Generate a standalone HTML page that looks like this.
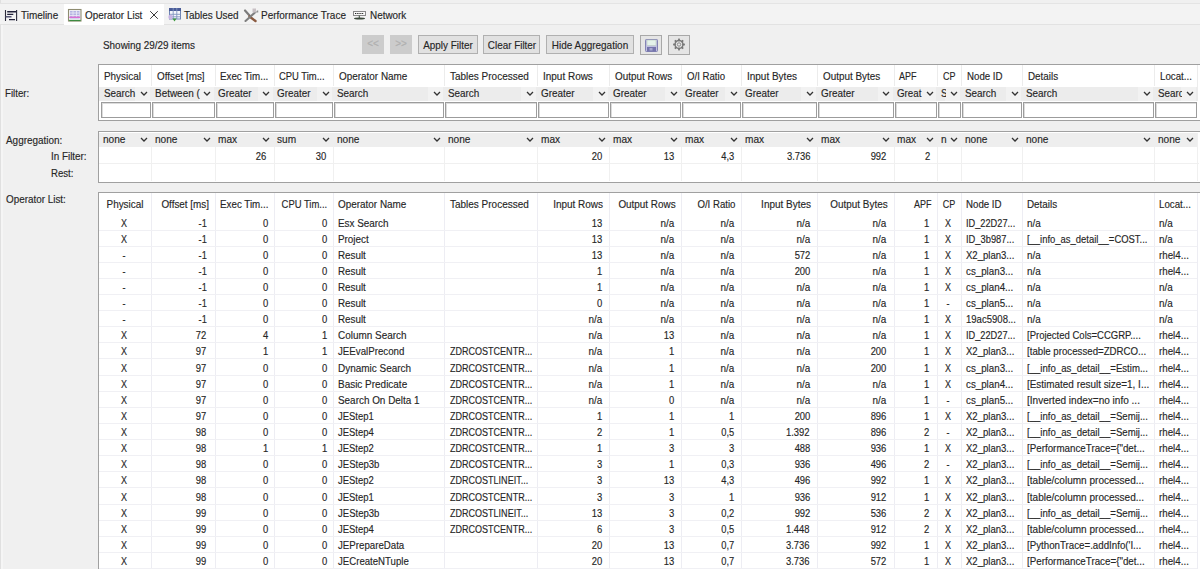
<!DOCTYPE html>
<html><head><meta charset="utf-8"><style>
html,body{margin:0;padding:0;width:1200px;height:569px;overflow:hidden;background:#f0f0f0;position:relative}
body{font-family:"Liberation Sans",sans-serif;font-size:11px;color:#262626}
.b{position:absolute;box-sizing:content-box}
.t{position:absolute;white-space:nowrap;line-height:12px;height:12px}
.t span{display:inline-block;-webkit-text-stroke:0.15px currentColor}
</style></head><body>
<div class="b" style="left:0.00px;top:0.00px;width:1.00px;height:569.00px;background:#e0e0e0;"></div>
<div class="b" style="left:1.00px;top:25.00px;width:2.00px;height:544.00px;background:#f5f5f5;"></div>
<div class="b" style="left:0.00px;top:3.00px;width:1200.00px;height:1.00px;background:#e4e4e4;"></div>
<div class="b" style="left:0.00px;top:4.00px;width:1200.00px;height:20.00px;background:#f3f3f3;"></div>
<div class="b" style="left:0.00px;top:24.00px;width:1200.00px;height:1.00px;background:#e2e2e2;"></div>
<div class="b" style="left:64.00px;top:4.00px;width:100.00px;height:21.00px;background:#ffffff;"></div>
<svg class="b" style="left:2px;top:6px" width="20" height="18" viewBox="0 0 20 18">
<path d="M3.5 4v11M14.6 4v11" stroke="#2c2c3c" stroke-width="1.1"/>
<path d="M5.2 5.7h9M5.2 8.4h6.1M7 13.6h6" stroke="#22223a" stroke-width="1.4"/>
<path d="M3.5 10.8h6" stroke="#4a4a6a" stroke-width="1.4"/>
</svg>
<svg class="b" style="left:64px;top:5px" width="22" height="20" viewBox="0 0 22 20">
<rect x="4.5" y="4.5" width="12.5" height="11.5" fill="#f2f2f8" stroke="#8e8c70" stroke-width="1.1"/>
<rect x="6" y="6" width="9.5" height="7.5" fill="#b4b4e2"/>
<path d="M6 8h9.5M6 10.5h9.5M9 6v7M12.5 6v7" stroke="#ececf8" stroke-width="0.8"/>
<path d="M5.2 12.3h11" stroke="#dc70d4" stroke-width="1.4"/>
<path d="M5.2 15.5h11.5" stroke="#3c8a40" stroke-width="1.2"/>
</svg>
<svg class="b" style="left:149px;top:10px" width="10" height="10" viewBox="0 0 10 10">
<path d="M1.2 1.2L8.8 8.8M8.8 1.2L1.2 8.8" stroke="#3a3a3a" stroke-width="1"/>
</svg>
<svg class="b" style="left:164px;top:5px" width="22" height="20" viewBox="0 0 22 20">
<rect x="5.5" y="3.5" width="11" height="10.5" fill="#f4f6fc" stroke="#6e84b4" stroke-width="1"/>
<rect x="5" y="3" width="12" height="3" fill="#4a5c98"/>
<path d="M5.5 9.3h11M5.5 11.8h11M9.2 3v11M12.8 3v11" stroke="#8094c0" stroke-width="0.9"/>
<circle cx="6.5" cy="12" r="2.2" fill="#c8b4e4"/>
<path d="M8.5 13.5l2 3 2-3z" fill="#3a9a3a"/>
</svg>
<svg class="b" style="left:240px;top:4px" width="22" height="20" viewBox="0 0 22 20">
<path d="M5 6.5l4.5 5" stroke="#7c7c7c" stroke-width="2.2" stroke-linecap="round"/>
<path d="M9.5 12.5l6 4.5" stroke="#8a5a40" stroke-width="2.4" stroke-linecap="round"/>
<path d="M15.5 8l-10 9" stroke="#808080" stroke-width="2.1" stroke-linecap="round"/>
<path d="M12.5 4.5h3.5v4h-3.5z" fill="#c8c0c4"/>
<path d="M17.5 6.5v2" stroke="#909090" stroke-width="1.5"/>
</svg>
<svg class="b" style="left:348px;top:4px" width="22" height="20" viewBox="0 0 22 20">
<rect x="5.5" y="7.5" width="12" height="4" fill="#fafafa" stroke="#8a8a8a" stroke-width="1"/>
<path d="M7 9.5h9" stroke="#222" stroke-width="1.2" stroke-dasharray="1.3 0.9"/>
<path d="M11.3 11.5v3" stroke="#4a5a4a" stroke-width="1.1"/>
<ellipse cx="11.5" cy="14.4" rx="5.5" ry="1" fill="#3c4a3c"/>
</svg>
<div class="t " style="left:21.00px;top:9.00px;"><span style="transform:scaleX(0.903);transform-origin:0 0">Timeline</span></div>
<div class="t " style="left:85.00px;top:9.00px;"><span style="transform:scaleX(0.902);transform-origin:0 0">Operator List</span></div>
<div class="t " style="left:184.00px;top:9.00px;"><span style="transform:scaleX(0.901);transform-origin:0 0">Tables Used</span></div>
<div class="t " style="left:261.00px;top:9.00px;"><span style="transform:scaleX(0.908);transform-origin:0 0">Performance Trace</span></div>
<div class="t " style="left:370.00px;top:9.00px;"><span style="transform:scaleX(0.899);transform-origin:0 0">Network</span></div>
<div class="t " style="left:103.00px;top:38.50px;"><span style="transform:scaleX(0.901);transform-origin:0 0">Showing 29/29 items</span></div>
<div class="b" style="left:362.00px;top:35.00px;width:22.00px;height:19.00px;background:#cccccc;"></div>
<div class="t " style="left:373.00px;top:38.00px;width:0;color:#b0b0b0;font-size:10px;"><span style="position:absolute;left:0;transform:translateX(-50%) scaleX(1.000);">&lt;&lt;</span></div>
<div class="b" style="left:390.00px;top:35.00px;width:22.00px;height:19.00px;background:#cccccc;"></div>
<div class="t " style="left:401.00px;top:38.00px;width:0;color:#b0b0b0;font-size:10px;"><span style="position:absolute;left:0;transform:translateX(-50%) scaleX(1.000);">&gt;&gt;</span></div>
<div class="b" style="left:418.00px;top:35.00px;width:58.00px;height:17.00px;background:#e1e1e1;border:1px solid #b0b0b0;"></div>
<div class="t " style="left:448.00px;top:38.50px;width:0;"><span style="position:absolute;left:0;transform:translateX(-50%) scaleX(0.900);">Apply Filter</span></div>
<div class="b" style="left:483.00px;top:35.00px;width:55.00px;height:17.00px;background:#e1e1e1;border:1px solid #b0b0b0;"></div>
<div class="t " style="left:511.50px;top:38.50px;width:0;"><span style="position:absolute;left:0;transform:translateX(-50%) scaleX(0.898);">Clear Filter</span></div>
<div class="b" style="left:546.00px;top:35.00px;width:86.00px;height:17.00px;background:#e1e1e1;border:1px solid #b0b0b0;"></div>
<div class="t " style="left:590.00px;top:38.50px;width:0;"><span style="position:absolute;left:0;transform:translateX(-50%) scaleX(0.905);">Hide Aggregation</span></div>
<div class="b" style="left:640.00px;top:35.00px;width:20.00px;height:18.00px;background:#e5e5e5;border:1px solid #a8a8a8;"></div>
<svg class="b" style="left:644px;top:38px" width="15" height="15" viewBox="0 0 15 15">
<rect x="1.5" y="1.5" width="12" height="12" rx="0.8" fill="#c0c0e0" stroke="#8484b4" stroke-width="1"/>
<rect x="3" y="2" width="9" height="5.5" fill="#e4f2ea" stroke="#b8c8c0" stroke-width="0.6"/>
<rect x="3" y="9" width="9" height="4.5" fill="#7474ac"/>
<rect x="5.5" y="10" width="3" height="2.5" fill="#a8a8d0"/>
</svg>
<div class="b" style="left:668.00px;top:35.00px;width:20.00px;height:18.00px;background:#e5e5e5;border:1px solid #a8a8a8;"></div>
<svg class="b" style="left:672px;top:38px" width="14" height="13" viewBox="0 0 14 13">
<circle cx="7" cy="6.5" r="4.0" fill="none" stroke="#7a7a7a" stroke-width="1.5"/>
<rect x="6.1" y="0.6" width="1.8" height="2.6" fill="#777" transform="rotate(0 7 6.5)"/><rect x="6.1" y="0.6" width="1.8" height="2.6" fill="#777" transform="rotate(45 7 6.5)"/><rect x="6.1" y="0.6" width="1.8" height="2.6" fill="#777" transform="rotate(90 7 6.5)"/><rect x="6.1" y="0.6" width="1.8" height="2.6" fill="#777" transform="rotate(135 7 6.5)"/><rect x="6.1" y="0.6" width="1.8" height="2.6" fill="#777" transform="rotate(180 7 6.5)"/><rect x="6.1" y="0.6" width="1.8" height="2.6" fill="#777" transform="rotate(225 7 6.5)"/><rect x="6.1" y="0.6" width="1.8" height="2.6" fill="#777" transform="rotate(270 7 6.5)"/><rect x="6.1" y="0.6" width="1.8" height="2.6" fill="#777" transform="rotate(315 7 6.5)"/>
<circle cx="7" cy="6.5" r="1.7" fill="none" stroke="#8a8a8a" stroke-width="1"/>
</svg>
<div class="t " style="left:4.50px;top:86.50px;"><span style="transform:scaleX(0.882);transform-origin:0 0">Filter:</span></div>
<div class="t " style="left:5.50px;top:133.70px;"><span style="transform:scaleX(0.902);transform-origin:0 0">Aggregation:</span></div>
<div class="t " style="left:51.00px;top:150.30px;"><span style="transform:scaleX(0.896);transform-origin:0 0">In Filter:</span></div>
<div class="t " style="left:51.00px;top:167.20px;"><span style="transform:scaleX(0.875);transform-origin:0 0">Rest:</span></div>
<div class="t " style="left:5.50px;top:193.30px;"><span style="transform:scaleX(0.898);transform-origin:0 0">Operator List:</span></div>
<div class="b" style="left:98.00px;top:64.00px;width:1110.00px;height:55.00px;background:#ffffff;border:1px solid #a0a0a0;"></div>
<div class="t " style="left:104.20px;top:70.00px;"><span style="transform:scaleX(0.901);transform-origin:0 0">Physical</span></div>
<div class="b" style="left:99.00px;top:87.00px;width:52.00px;height:14.00px;background:#ececec;"></div>
<div class="b" style="left:135.00px;top:87.00px;width:15.00px;height:14.00px;background:#f2f2f2;"></div>
<svg class="b" style="left:139.5px;top:91px" width="8" height="6" viewBox="0 0 8 6"><path d="M1 1l3 3 3-3" fill="none" stroke="#333" stroke-width="1.3"/></svg>
<div class="b" style="left:99.0px;top:80px;width:37.0px;height:24px;overflow:hidden">
<div class="t " style="left:4.75px;top:6.50px;"><span style="transform:scaleX(0.898);transform-origin:0 0">Search</span></div>
</div>
<div class="b" style="left:101.00px;top:102.00px;width:48.00px;height:14.00px;background:#ffffff;border:1px solid #9c9c9c;box-shadow:inset 1px 1px 0 #dcdcdc;"></div>
<div class="b" style="left:151.00px;top:65.00px;width:1.00px;height:21.00px;background:#ececec;"></div>
<div class="t " style="left:156.50px;top:70.00px;"><span style="transform:scaleX(0.898);transform-origin:0 0">Offset [ms]</span></div>
<div class="b" style="left:151.00px;top:87.00px;width:63.50px;height:14.00px;background:#ececec;"></div>
<div class="b" style="left:198.50px;top:87.00px;width:15.00px;height:14.00px;background:#f2f2f2;"></div>
<svg class="b" style="left:203.0px;top:91px" width="8" height="6" viewBox="0 0 8 6"><path d="M1 1l3 3 3-3" fill="none" stroke="#333" stroke-width="1.3"/></svg>
<div class="b" style="left:152.0px;top:80px;width:47.5px;height:24px;overflow:hidden">
<div class="t " style="left:2.50px;top:6.50px;"><span style="transform:scaleX(0.904);transform-origin:0 0">Between (</span></div>
</div>
<div class="b" style="left:152.00px;top:102.00px;width:60.50px;height:14.00px;background:#ffffff;border:1px solid #9c9c9c;box-shadow:inset 1px 1px 0 #dcdcdc;"></div>
<div class="b" style="left:214.50px;top:65.00px;width:1.00px;height:21.00px;background:#ececec;"></div>
<div class="t " style="left:220.00px;top:70.00px;"><span style="transform:scaleX(0.888);transform-origin:0 0">Exec Tim...</span></div>
<div class="b" style="left:214.50px;top:87.00px;width:59.00px;height:14.00px;background:#ececec;"></div>
<div class="b" style="left:257.50px;top:87.00px;width:15.00px;height:14.00px;background:#f2f2f2;"></div>
<svg class="b" style="left:262.0px;top:91px" width="8" height="6" viewBox="0 0 8 6"><path d="M1 1l3 3 3-3" fill="none" stroke="#333" stroke-width="1.3"/></svg>
<div class="b" style="left:215.5px;top:80px;width:43.0px;height:24px;overflow:hidden">
<div class="t " style="left:2.50px;top:6.50px;"><span style="transform:scaleX(0.896);transform-origin:0 0">Greater</span></div>
</div>
<div class="b" style="left:215.50px;top:102.00px;width:56.00px;height:14.00px;background:#ffffff;border:1px solid #9c9c9c;box-shadow:inset 1px 1px 0 #dcdcdc;"></div>
<div class="b" style="left:273.50px;top:65.00px;width:1.00px;height:21.00px;background:#ececec;"></div>
<div class="t " style="left:279.00px;top:70.00px;"><span style="transform:scaleX(0.857);transform-origin:0 0">CPU Tim...</span></div>
<div class="b" style="left:273.50px;top:87.00px;width:59.50px;height:14.00px;background:#ececec;"></div>
<div class="b" style="left:317.00px;top:87.00px;width:15.00px;height:14.00px;background:#f2f2f2;"></div>
<svg class="b" style="left:321.5px;top:91px" width="8" height="6" viewBox="0 0 8 6"><path d="M1 1l3 3 3-3" fill="none" stroke="#333" stroke-width="1.3"/></svg>
<div class="b" style="left:274.5px;top:80px;width:43.5px;height:24px;overflow:hidden">
<div class="t " style="left:2.50px;top:6.50px;"><span style="transform:scaleX(0.896);transform-origin:0 0">Greater</span></div>
</div>
<div class="b" style="left:274.50px;top:102.00px;width:56.50px;height:14.00px;background:#ffffff;border:1px solid #9c9c9c;box-shadow:inset 1px 1px 0 #dcdcdc;"></div>
<div class="b" style="left:333.00px;top:65.00px;width:1.00px;height:21.00px;background:#ececec;"></div>
<div class="t " style="left:338.50px;top:70.00px;"><span style="transform:scaleX(0.902);transform-origin:0 0">Operator Name</span></div>
<div class="b" style="left:333.00px;top:87.00px;width:111.00px;height:14.00px;background:#ececec;"></div>
<div class="b" style="left:428.00px;top:87.00px;width:15.00px;height:14.00px;background:#f2f2f2;"></div>
<svg class="b" style="left:432.5px;top:91px" width="8" height="6" viewBox="0 0 8 6"><path d="M1 1l3 3 3-3" fill="none" stroke="#333" stroke-width="1.3"/></svg>
<div class="b" style="left:334.0px;top:80px;width:95.0px;height:24px;overflow:hidden">
<div class="t " style="left:2.50px;top:6.50px;"><span style="transform:scaleX(0.898);transform-origin:0 0">Search</span></div>
</div>
<div class="b" style="left:334.00px;top:102.00px;width:108.00px;height:14.00px;background:#ffffff;border:1px solid #9c9c9c;box-shadow:inset 1px 1px 0 #dcdcdc;"></div>
<div class="b" style="left:444.00px;top:65.00px;width:1.00px;height:21.00px;background:#ececec;"></div>
<div class="t " style="left:449.50px;top:70.00px;"><span style="transform:scaleX(0.907);transform-origin:0 0">Tables Processed</span></div>
<div class="b" style="left:444.00px;top:87.00px;width:93.00px;height:14.00px;background:#ececec;"></div>
<div class="b" style="left:521.00px;top:87.00px;width:15.00px;height:14.00px;background:#f2f2f2;"></div>
<svg class="b" style="left:525.5px;top:91px" width="8" height="6" viewBox="0 0 8 6"><path d="M1 1l3 3 3-3" fill="none" stroke="#333" stroke-width="1.3"/></svg>
<div class="b" style="left:445.0px;top:80px;width:77.0px;height:24px;overflow:hidden">
<div class="t " style="left:2.50px;top:6.50px;"><span style="transform:scaleX(0.898);transform-origin:0 0">Search</span></div>
</div>
<div class="b" style="left:445.00px;top:102.00px;width:90.00px;height:14.00px;background:#ffffff;border:1px solid #9c9c9c;box-shadow:inset 1px 1px 0 #dcdcdc;"></div>
<div class="b" style="left:537.00px;top:65.00px;width:1.00px;height:21.00px;background:#ececec;"></div>
<div class="t " style="left:542.50px;top:70.00px;"><span style="transform:scaleX(0.906);transform-origin:0 0">Input Rows</span></div>
<div class="b" style="left:537.00px;top:87.00px;width:72.00px;height:14.00px;background:#ececec;"></div>
<div class="b" style="left:593.00px;top:87.00px;width:15.00px;height:14.00px;background:#f2f2f2;"></div>
<svg class="b" style="left:597.5px;top:91px" width="8" height="6" viewBox="0 0 8 6"><path d="M1 1l3 3 3-3" fill="none" stroke="#333" stroke-width="1.3"/></svg>
<div class="b" style="left:538.0px;top:80px;width:56.0px;height:24px;overflow:hidden">
<div class="t " style="left:2.50px;top:6.50px;"><span style="transform:scaleX(0.896);transform-origin:0 0">Greater</span></div>
</div>
<div class="b" style="left:538.00px;top:102.00px;width:69.00px;height:14.00px;background:#ffffff;border:1px solid #9c9c9c;box-shadow:inset 1px 1px 0 #dcdcdc;"></div>
<div class="b" style="left:609.00px;top:65.00px;width:1.00px;height:21.00px;background:#ececec;"></div>
<div class="t " style="left:614.50px;top:70.00px;"><span style="transform:scaleX(0.899);transform-origin:0 0">Output Rows</span></div>
<div class="b" style="left:609.00px;top:87.00px;width:72.00px;height:14.00px;background:#ececec;"></div>
<div class="b" style="left:665.00px;top:87.00px;width:15.00px;height:14.00px;background:#f2f2f2;"></div>
<svg class="b" style="left:669.5px;top:91px" width="8" height="6" viewBox="0 0 8 6"><path d="M1 1l3 3 3-3" fill="none" stroke="#333" stroke-width="1.3"/></svg>
<div class="b" style="left:610.0px;top:80px;width:56.0px;height:24px;overflow:hidden">
<div class="t " style="left:2.50px;top:6.50px;"><span style="transform:scaleX(0.896);transform-origin:0 0">Greater</span></div>
</div>
<div class="b" style="left:610.00px;top:102.00px;width:69.00px;height:14.00px;background:#ffffff;border:1px solid #9c9c9c;box-shadow:inset 1px 1px 0 #dcdcdc;"></div>
<div class="b" style="left:681.00px;top:65.00px;width:1.00px;height:21.00px;background:#ececec;"></div>
<div class="t " style="left:686.50px;top:70.00px;"><span style="transform:scaleX(0.875);transform-origin:0 0">O/I Ratio</span></div>
<div class="b" style="left:681.00px;top:87.00px;width:60.00px;height:14.00px;background:#ececec;"></div>
<div class="b" style="left:725.00px;top:87.00px;width:15.00px;height:14.00px;background:#f2f2f2;"></div>
<svg class="b" style="left:729.5px;top:91px" width="8" height="6" viewBox="0 0 8 6"><path d="M1 1l3 3 3-3" fill="none" stroke="#333" stroke-width="1.3"/></svg>
<div class="b" style="left:682.0px;top:80px;width:44.0px;height:24px;overflow:hidden">
<div class="t " style="left:2.50px;top:6.50px;"><span style="transform:scaleX(0.896);transform-origin:0 0">Greater</span></div>
</div>
<div class="b" style="left:682.00px;top:102.00px;width:57.00px;height:14.00px;background:#ffffff;border:1px solid #9c9c9c;box-shadow:inset 1px 1px 0 #dcdcdc;"></div>
<div class="b" style="left:741.00px;top:65.00px;width:1.00px;height:21.00px;background:#ececec;"></div>
<div class="t " style="left:746.50px;top:70.00px;"><span style="transform:scaleX(0.907);transform-origin:0 0">Input Bytes</span></div>
<div class="b" style="left:741.00px;top:87.00px;width:76.00px;height:14.00px;background:#ececec;"></div>
<div class="b" style="left:801.00px;top:87.00px;width:15.00px;height:14.00px;background:#f2f2f2;"></div>
<svg class="b" style="left:805.5px;top:91px" width="8" height="6" viewBox="0 0 8 6"><path d="M1 1l3 3 3-3" fill="none" stroke="#333" stroke-width="1.3"/></svg>
<div class="b" style="left:742.0px;top:80px;width:60.0px;height:24px;overflow:hidden">
<div class="t " style="left:2.50px;top:6.50px;"><span style="transform:scaleX(0.896);transform-origin:0 0">Greater</span></div>
</div>
<div class="b" style="left:742.00px;top:102.00px;width:73.00px;height:14.00px;background:#ffffff;border:1px solid #9c9c9c;box-shadow:inset 1px 1px 0 #dcdcdc;"></div>
<div class="b" style="left:817.00px;top:65.00px;width:1.00px;height:21.00px;background:#ececec;"></div>
<div class="t " style="left:822.50px;top:70.00px;"><span style="transform:scaleX(0.900);transform-origin:0 0">Output Bytes</span></div>
<div class="b" style="left:817.00px;top:87.00px;width:76.50px;height:14.00px;background:#ececec;"></div>
<div class="b" style="left:877.50px;top:87.00px;width:15.00px;height:14.00px;background:#f2f2f2;"></div>
<svg class="b" style="left:882.0px;top:91px" width="8" height="6" viewBox="0 0 8 6"><path d="M1 1l3 3 3-3" fill="none" stroke="#333" stroke-width="1.3"/></svg>
<div class="b" style="left:818.0px;top:80px;width:60.5px;height:24px;overflow:hidden">
<div class="t " style="left:2.50px;top:6.50px;"><span style="transform:scaleX(0.896);transform-origin:0 0">Greater</span></div>
</div>
<div class="b" style="left:818.00px;top:102.00px;width:73.50px;height:14.00px;background:#ffffff;border:1px solid #9c9c9c;box-shadow:inset 1px 1px 0 #dcdcdc;"></div>
<div class="b" style="left:893.50px;top:65.00px;width:1.00px;height:21.00px;background:#ececec;"></div>
<div class="t " style="left:899.00px;top:70.00px;"><span style="transform:scaleX(0.817);transform-origin:0 0">APF</span></div>
<div class="b" style="left:893.50px;top:87.00px;width:43.50px;height:14.00px;background:#ececec;"></div>
<div class="b" style="left:921.00px;top:87.00px;width:15.00px;height:14.00px;background:#f2f2f2;"></div>
<svg class="b" style="left:925.5px;top:91px" width="8" height="6" viewBox="0 0 8 6"><path d="M1 1l3 3 3-3" fill="none" stroke="#333" stroke-width="1.3"/></svg>
<div class="b" style="left:894.5px;top:80px;width:27.5px;height:24px;overflow:hidden">
<div class="t " style="left:2.50px;top:6.50px;"><span style="transform:scaleX(0.887);transform-origin:0 0">Great</span></div>
</div>
<div class="b" style="left:894.50px;top:102.00px;width:40.50px;height:14.00px;background:#ffffff;border:1px solid #9c9c9c;box-shadow:inset 1px 1px 0 #dcdcdc;"></div>
<div class="b" style="left:937.00px;top:65.00px;width:1.00px;height:21.00px;background:#ececec;"></div>
<div class="t " style="left:942.50px;top:70.00px;"><span style="transform:scaleX(0.817);transform-origin:0 0">CP</span></div>
<div class="b" style="left:937.00px;top:87.00px;width:24.00px;height:14.00px;background:#ececec;"></div>
<div class="b" style="left:945.00px;top:87.00px;width:15.00px;height:14.00px;background:#f2f2f2;"></div>
<svg class="b" style="left:949.5px;top:91px" width="8" height="6" viewBox="0 0 8 6"><path d="M1 1l3 3 3-3" fill="none" stroke="#333" stroke-width="1.3"/></svg>
<div class="b" style="left:938.0px;top:80px;width:8.0px;height:24px;overflow:hidden">
<div class="t " style="left:2.50px;top:6.50px;"><span style="transform:scaleX(0.863);transform-origin:0 0">Se</span></div>
</div>
<div class="b" style="left:938.00px;top:102.00px;width:21.00px;height:14.00px;background:#ffffff;border:1px solid #9c9c9c;box-shadow:inset 1px 1px 0 #dcdcdc;"></div>
<div class="b" style="left:961.00px;top:65.00px;width:1.00px;height:21.00px;background:#ececec;"></div>
<div class="t " style="left:966.50px;top:70.00px;"><span style="transform:scaleX(0.881);transform-origin:0 0">Node ID</span></div>
<div class="b" style="left:961.00px;top:87.00px;width:61.00px;height:14.00px;background:#ececec;"></div>
<div class="b" style="left:1006.00px;top:87.00px;width:15.00px;height:14.00px;background:#f2f2f2;"></div>
<svg class="b" style="left:1010.5px;top:91px" width="8" height="6" viewBox="0 0 8 6"><path d="M1 1l3 3 3-3" fill="none" stroke="#333" stroke-width="1.3"/></svg>
<div class="b" style="left:962.0px;top:80px;width:45.0px;height:24px;overflow:hidden">
<div class="t " style="left:2.50px;top:6.50px;"><span style="transform:scaleX(0.898);transform-origin:0 0">Search</span></div>
</div>
<div class="b" style="left:962.00px;top:102.00px;width:58.00px;height:14.00px;background:#ffffff;border:1px solid #9c9c9c;box-shadow:inset 1px 1px 0 #dcdcdc;"></div>
<div class="b" style="left:1022.00px;top:65.00px;width:1.00px;height:21.00px;background:#ececec;"></div>
<div class="t " style="left:1027.50px;top:70.00px;"><span style="transform:scaleX(0.895);transform-origin:0 0">Details</span></div>
<div class="b" style="left:1022.00px;top:87.00px;width:132.00px;height:14.00px;background:#ececec;"></div>
<div class="b" style="left:1138.00px;top:87.00px;width:15.00px;height:14.00px;background:#f2f2f2;"></div>
<svg class="b" style="left:1142.5px;top:91px" width="8" height="6" viewBox="0 0 8 6"><path d="M1 1l3 3 3-3" fill="none" stroke="#333" stroke-width="1.3"/></svg>
<div class="b" style="left:1023.0px;top:80px;width:116.0px;height:24px;overflow:hidden">
<div class="t " style="left:2.50px;top:6.50px;"><span style="transform:scaleX(0.898);transform-origin:0 0">Search</span></div>
</div>
<div class="b" style="left:1023.00px;top:102.00px;width:129.00px;height:14.00px;background:#ffffff;border:1px solid #9c9c9c;box-shadow:inset 1px 1px 0 #dcdcdc;"></div>
<div class="b" style="left:1154.00px;top:65.00px;width:1.00px;height:21.00px;background:#ececec;"></div>
<div class="b" style="left:1197.00px;top:65.00px;width:1.00px;height:36.00px;background:#ececec;"></div>
<div class="t " style="left:1159.50px;top:70.00px;"><span style="transform:scaleX(0.883);transform-origin:0 0">Locat...</span></div>
<div class="b" style="left:1154.00px;top:87.00px;width:43.00px;height:14.00px;background:#ececec;"></div>
<div class="b" style="left:1181.00px;top:87.00px;width:15.00px;height:14.00px;background:#f2f2f2;"></div>
<svg class="b" style="left:1185.5px;top:91px" width="8" height="6" viewBox="0 0 8 6"><path d="M1 1l3 3 3-3" fill="none" stroke="#333" stroke-width="1.3"/></svg>
<div class="b" style="left:1155.0px;top:80px;width:27.0px;height:24px;overflow:hidden">
<div class="t " style="left:2.50px;top:6.50px;"><span style="transform:scaleX(0.893);transform-origin:0 0">Searc</span></div>
</div>
<div class="b" style="left:1155.00px;top:102.00px;width:40.00px;height:14.00px;background:#ffffff;border:1px solid #9c9c9c;box-shadow:inset 1px 1px 0 #dcdcdc;"></div>
<div class="b" style="left:98.00px;top:131.00px;width:1110.00px;height:50.00px;background:#ffffff;border:1px solid #a0a0a0;"></div>
<div class="b" style="left:99.00px;top:133.00px;width:52.00px;height:14.00px;background:#eeeeee;"></div>
<svg class="b" style="left:139.5px;top:137px" width="8" height="6" viewBox="0 0 8 6"><path d="M1 1l3 3 3-3" fill="none" stroke="#333" stroke-width="1.3"/></svg>
<div class="t " style="left:103.00px;top:132.70px;"><span style="transform:scaleX(0.919);transform-origin:0 0">none</span></div>
<div class="b" style="left:151.00px;top:133.00px;width:63.50px;height:14.00px;background:#eeeeee;"></div>
<svg class="b" style="left:203.0px;top:137px" width="8" height="6" viewBox="0 0 8 6"><path d="M1 1l3 3 3-3" fill="none" stroke="#333" stroke-width="1.3"/></svg>
<div class="t " style="left:154.50px;top:132.70px;"><span style="transform:scaleX(0.919);transform-origin:0 0">none</span></div>
<div class="b" style="left:151.00px;top:147.00px;width:1.00px;height:34.00px;background:#f0f0f0;"></div>
<div class="b" style="left:214.50px;top:133.00px;width:59.00px;height:14.00px;background:#eeeeee;"></div>
<svg class="b" style="left:262.0px;top:137px" width="8" height="6" viewBox="0 0 8 6"><path d="M1 1l3 3 3-3" fill="none" stroke="#333" stroke-width="1.3"/></svg>
<div class="t " style="left:218.00px;top:132.70px;"><span style="transform:scaleX(0.919);transform-origin:0 0">max</span></div>
<div class="b" style="left:214.50px;top:147.00px;width:1.00px;height:34.00px;background:#f0f0f0;"></div>
<div class="t " style="right:933.30px;top:150.30px;"><span style="transform:scaleX(0.857);transform-origin:100% 0">26</span></div>
<div class="b" style="left:273.50px;top:133.00px;width:59.50px;height:14.00px;background:#eeeeee;"></div>
<svg class="b" style="left:321.5px;top:137px" width="8" height="6" viewBox="0 0 8 6"><path d="M1 1l3 3 3-3" fill="none" stroke="#333" stroke-width="1.3"/></svg>
<div class="t " style="left:277.00px;top:132.70px;"><span style="transform:scaleX(0.919);transform-origin:0 0">sum</span></div>
<div class="b" style="left:273.50px;top:147.00px;width:1.00px;height:34.00px;background:#f0f0f0;"></div>
<div class="t " style="right:873.80px;top:150.30px;"><span style="transform:scaleX(0.857);transform-origin:100% 0">30</span></div>
<div class="b" style="left:333.00px;top:133.00px;width:111.00px;height:14.00px;background:#eeeeee;"></div>
<svg class="b" style="left:432.5px;top:137px" width="8" height="6" viewBox="0 0 8 6"><path d="M1 1l3 3 3-3" fill="none" stroke="#333" stroke-width="1.3"/></svg>
<div class="t " style="left:336.50px;top:132.70px;"><span style="transform:scaleX(0.919);transform-origin:0 0">none</span></div>
<div class="b" style="left:333.00px;top:147.00px;width:1.00px;height:34.00px;background:#f0f0f0;"></div>
<div class="b" style="left:444.00px;top:133.00px;width:93.00px;height:14.00px;background:#eeeeee;"></div>
<svg class="b" style="left:525.5px;top:137px" width="8" height="6" viewBox="0 0 8 6"><path d="M1 1l3 3 3-3" fill="none" stroke="#333" stroke-width="1.3"/></svg>
<div class="t " style="left:447.50px;top:132.70px;"><span style="transform:scaleX(0.919);transform-origin:0 0">none</span></div>
<div class="b" style="left:444.00px;top:147.00px;width:1.00px;height:34.00px;background:#f0f0f0;"></div>
<div class="b" style="left:537.00px;top:133.00px;width:72.00px;height:14.00px;background:#eeeeee;"></div>
<svg class="b" style="left:597.5px;top:137px" width="8" height="6" viewBox="0 0 8 6"><path d="M1 1l3 3 3-3" fill="none" stroke="#333" stroke-width="1.3"/></svg>
<div class="t " style="left:540.50px;top:132.70px;"><span style="transform:scaleX(0.919);transform-origin:0 0">max</span></div>
<div class="b" style="left:537.00px;top:147.00px;width:1.00px;height:34.00px;background:#f0f0f0;"></div>
<div class="t " style="right:597.80px;top:150.30px;"><span style="transform:scaleX(0.857);transform-origin:100% 0">20</span></div>
<div class="b" style="left:609.00px;top:133.00px;width:72.00px;height:14.00px;background:#eeeeee;"></div>
<svg class="b" style="left:669.5px;top:137px" width="8" height="6" viewBox="0 0 8 6"><path d="M1 1l3 3 3-3" fill="none" stroke="#333" stroke-width="1.3"/></svg>
<div class="t " style="left:612.50px;top:132.70px;"><span style="transform:scaleX(0.919);transform-origin:0 0">max</span></div>
<div class="b" style="left:609.00px;top:147.00px;width:1.00px;height:34.00px;background:#f0f0f0;"></div>
<div class="t " style="right:525.80px;top:150.30px;"><span style="transform:scaleX(0.857);transform-origin:100% 0">13</span></div>
<div class="b" style="left:681.00px;top:133.00px;width:60.00px;height:14.00px;background:#eeeeee;"></div>
<svg class="b" style="left:729.5px;top:137px" width="8" height="6" viewBox="0 0 8 6"><path d="M1 1l3 3 3-3" fill="none" stroke="#333" stroke-width="1.3"/></svg>
<div class="t " style="left:684.50px;top:132.70px;"><span style="transform:scaleX(0.919);transform-origin:0 0">max</span></div>
<div class="b" style="left:681.00px;top:147.00px;width:1.00px;height:34.00px;background:#f0f0f0;"></div>
<div class="t " style="right:465.80px;top:150.30px;"><span style="transform:scaleX(0.848);transform-origin:100% 0">4,3</span></div>
<div class="b" style="left:741.00px;top:133.00px;width:76.00px;height:14.00px;background:#eeeeee;"></div>
<svg class="b" style="left:805.5px;top:137px" width="8" height="6" viewBox="0 0 8 6"><path d="M1 1l3 3 3-3" fill="none" stroke="#333" stroke-width="1.3"/></svg>
<div class="t " style="left:744.50px;top:132.70px;"><span style="transform:scaleX(0.919);transform-origin:0 0">max</span></div>
<div class="b" style="left:741.00px;top:147.00px;width:1.00px;height:34.00px;background:#f0f0f0;"></div>
<div class="t " style="right:389.80px;top:150.30px;"><span style="transform:scaleX(0.856);transform-origin:100% 0">3.736</span></div>
<div class="b" style="left:817.00px;top:133.00px;width:76.50px;height:14.00px;background:#eeeeee;"></div>
<svg class="b" style="left:882.0px;top:137px" width="8" height="6" viewBox="0 0 8 6"><path d="M1 1l3 3 3-3" fill="none" stroke="#333" stroke-width="1.3"/></svg>
<div class="t " style="left:820.50px;top:132.70px;"><span style="transform:scaleX(0.919);transform-origin:0 0">max</span></div>
<div class="b" style="left:817.00px;top:147.00px;width:1.00px;height:34.00px;background:#f0f0f0;"></div>
<div class="t " style="right:313.30px;top:150.30px;"><span style="transform:scaleX(0.857);transform-origin:100% 0">992</span></div>
<div class="b" style="left:893.50px;top:133.00px;width:43.50px;height:14.00px;background:#eeeeee;"></div>
<svg class="b" style="left:925.5px;top:137px" width="8" height="6" viewBox="0 0 8 6"><path d="M1 1l3 3 3-3" fill="none" stroke="#333" stroke-width="1.3"/></svg>
<div class="t " style="left:897.00px;top:132.70px;"><span style="transform:scaleX(0.919);transform-origin:0 0">max</span></div>
<div class="b" style="left:893.50px;top:147.00px;width:1.00px;height:34.00px;background:#f0f0f0;"></div>
<div class="t " style="right:269.80px;top:150.30px;"><span style="transform:scaleX(0.857);transform-origin:100% 0">2</span></div>
<div class="b" style="left:937.00px;top:133.00px;width:24.00px;height:14.00px;background:#eeeeee;"></div>
<svg class="b" style="left:949.5px;top:137px" width="8" height="6" viewBox="0 0 8 6"><path d="M1 1l3 3 3-3" fill="none" stroke="#333" stroke-width="1.3"/></svg>
<div class="t " style="left:940.50px;top:132.70px;"><span style="transform:scaleX(0.919);transform-origin:0 0">n</span></div>
<div class="b" style="left:937.00px;top:147.00px;width:1.00px;height:34.00px;background:#f0f0f0;"></div>
<div class="b" style="left:961.00px;top:133.00px;width:61.00px;height:14.00px;background:#eeeeee;"></div>
<svg class="b" style="left:1010.5px;top:137px" width="8" height="6" viewBox="0 0 8 6"><path d="M1 1l3 3 3-3" fill="none" stroke="#333" stroke-width="1.3"/></svg>
<div class="t " style="left:964.50px;top:132.70px;"><span style="transform:scaleX(0.919);transform-origin:0 0">none</span></div>
<div class="b" style="left:961.00px;top:147.00px;width:1.00px;height:34.00px;background:#f0f0f0;"></div>
<div class="b" style="left:1022.00px;top:133.00px;width:132.00px;height:14.00px;background:#eeeeee;"></div>
<svg class="b" style="left:1142.5px;top:137px" width="8" height="6" viewBox="0 0 8 6"><path d="M1 1l3 3 3-3" fill="none" stroke="#333" stroke-width="1.3"/></svg>
<div class="t " style="left:1025.50px;top:132.70px;"><span style="transform:scaleX(0.919);transform-origin:0 0">none</span></div>
<div class="b" style="left:1022.00px;top:147.00px;width:1.00px;height:34.00px;background:#f0f0f0;"></div>
<div class="b" style="left:1154.00px;top:133.00px;width:43.00px;height:14.00px;background:#eeeeee;"></div>
<svg class="b" style="left:1185.5px;top:137px" width="8" height="6" viewBox="0 0 8 6"><path d="M1 1l3 3 3-3" fill="none" stroke="#333" stroke-width="1.3"/></svg>
<div class="t " style="left:1157.50px;top:132.70px;"><span style="transform:scaleX(0.919);transform-origin:0 0">none</span></div>
<div class="b" style="left:1154.00px;top:147.00px;width:1.00px;height:34.00px;background:#f0f0f0;"></div>
<div class="b" style="left:1197.00px;top:133.00px;width:1.00px;height:48.00px;background:#f0f0f0;"></div>
<div class="b" style="left:99.00px;top:163.00px;width:1100.00px;height:1.00px;background:#f0f0f0;"></div>
<div class="b" style="left:98.00px;top:192.00px;width:1110.00px;height:400.00px;background:#ffffff;border:1px solid #a0a0a0;"></div>
<div class="b" style="left:151.00px;top:193.00px;width:1.00px;height:376.00px;background:#ededf3;"></div>
<div class="b" style="left:214.50px;top:193.00px;width:1.00px;height:376.00px;background:#ededf3;"></div>
<div class="b" style="left:273.50px;top:193.00px;width:1.00px;height:376.00px;background:#ededf3;"></div>
<div class="b" style="left:333.00px;top:193.00px;width:1.00px;height:376.00px;background:#ededf3;"></div>
<div class="b" style="left:444.00px;top:193.00px;width:1.00px;height:376.00px;background:#ededf3;"></div>
<div class="b" style="left:537.00px;top:193.00px;width:1.00px;height:376.00px;background:#ededf3;"></div>
<div class="b" style="left:609.00px;top:193.00px;width:1.00px;height:376.00px;background:#ededf3;"></div>
<div class="b" style="left:681.00px;top:193.00px;width:1.00px;height:376.00px;background:#ededf3;"></div>
<div class="b" style="left:741.00px;top:193.00px;width:1.00px;height:376.00px;background:#ededf3;"></div>
<div class="b" style="left:817.00px;top:193.00px;width:1.00px;height:376.00px;background:#ededf3;"></div>
<div class="b" style="left:893.50px;top:193.00px;width:1.00px;height:376.00px;background:#ededf3;"></div>
<div class="b" style="left:937.00px;top:193.00px;width:1.00px;height:376.00px;background:#ededf3;"></div>
<div class="b" style="left:961.00px;top:193.00px;width:1.00px;height:376.00px;background:#ededf3;"></div>
<div class="b" style="left:1022.00px;top:193.00px;width:1.00px;height:376.00px;background:#ededf3;"></div>
<div class="b" style="left:1154.00px;top:193.00px;width:1.00px;height:376.00px;background:#ededf3;"></div>
<div class="b" style="left:1197.00px;top:193.00px;width:1.00px;height:376.00px;background:#ededf3;"></div>
<div class="t " style="left:124.50px;top:198.00px;width:0;"><span style="position:absolute;left:0;transform:translateX(-50%) scaleX(0.901);">Physical</span></div>
<div class="t " style="right:991.00px;top:198.00px;"><span style="transform:scaleX(0.898);transform-origin:100% 0">Offset [ms]</span></div>
<div class="t " style="right:932.00px;top:198.00px;"><span style="transform:scaleX(0.888);transform-origin:100% 0">Exec Tim...</span></div>
<div class="t " style="right:872.50px;top:198.00px;"><span style="transform:scaleX(0.857);transform-origin:100% 0">CPU Tim...</span></div>
<div class="t " style="left:338.30px;top:198.00px;"><span style="transform:scaleX(0.902);transform-origin:0 0">Operator Name</span></div>
<div class="t " style="left:449.60px;top:198.00px;"><span style="transform:scaleX(0.907);transform-origin:0 0">Tables Processed</span></div>
<div class="t " style="right:596.50px;top:198.00px;"><span style="transform:scaleX(0.906);transform-origin:100% 0">Input Rows</span></div>
<div class="t " style="right:524.50px;top:198.00px;"><span style="transform:scaleX(0.899);transform-origin:100% 0">Output Rows</span></div>
<div class="t " style="right:464.50px;top:198.00px;"><span style="transform:scaleX(0.875);transform-origin:100% 0">O/I Ratio</span></div>
<div class="t " style="right:388.50px;top:198.00px;"><span style="transform:scaleX(0.907);transform-origin:100% 0">Input Bytes</span></div>
<div class="t " style="right:312.00px;top:198.00px;"><span style="transform:scaleX(0.900);transform-origin:100% 0">Output Bytes</span></div>
<div class="t " style="right:268.50px;top:198.00px;"><span style="transform:scaleX(0.817);transform-origin:100% 0">APF</span></div>
<div class="t " style="left:949.00px;top:198.00px;width:0;"><span style="position:absolute;left:0;transform:translateX(-50%) scaleX(0.817);">CP</span></div>
<div class="t " style="left:966.00px;top:198.00px;"><span style="transform:scaleX(0.881);transform-origin:0 0">Node ID</span></div>
<div class="t " style="left:1026.80px;top:198.00px;"><span style="transform:scaleX(0.895);transform-origin:0 0">Details</span></div>
<div class="t " style="left:1159.00px;top:198.00px;"><span style="transform:scaleX(0.883);transform-origin:0 0">Locat...</span></div>
<div class="b" style="left:99.00px;top:230.00px;width:1098.00px;height:1.00px;background:#f0f0f4;"></div>
<div class="t " style="left:124.00px;top:216.50px;width:0;"><span style="position:absolute;left:0;transform:translateX(-50%) scaleX(0.817);">X</span></div>
<div class="t " style="right:993.30px;top:216.50px;"><span style="transform:scaleX(0.841);transform-origin:100% 0">-1</span></div>
<div class="t " style="right:932.00px;top:216.50px;"><span style="transform:scaleX(0.857);transform-origin:100% 0">0</span></div>
<div class="t " style="right:873.00px;top:216.50px;"><span style="transform:scaleX(0.857);transform-origin:100% 0">0</span></div>
<div class="t " style="left:338.30px;top:216.50px;"><span style="transform:scaleX(0.899);transform-origin:0 0">Esx Search</span></div>
<div class="t " style="right:598.00px;top:216.50px;"><span style="transform:scaleX(0.857);transform-origin:100% 0">13</span></div>
<div class="t " style="right:526.00px;top:216.50px;"><span style="transform:scaleX(0.898);transform-origin:100% 0">n/a</span></div>
<div class="t " style="right:466.00px;top:216.50px;"><span style="transform:scaleX(0.898);transform-origin:100% 0">n/a</span></div>
<div class="t " style="right:390.00px;top:216.50px;"><span style="transform:scaleX(0.898);transform-origin:100% 0">n/a</span></div>
<div class="t " style="right:313.50px;top:216.50px;"><span style="transform:scaleX(0.898);transform-origin:100% 0">n/a</span></div>
<div class="t " style="right:271.30px;top:216.50px;"><span style="transform:scaleX(0.857);transform-origin:100% 0">1</span></div>
<div class="t " style="left:947.50px;top:216.50px;width:0;"><span style="position:absolute;left:0;transform:translateX(-50%) scaleX(0.817);">X</span></div>
<div class="t " style="left:966.00px;top:216.50px;"><span style="transform:scaleX(0.838);transform-origin:0 0">ID_22D27...</span></div>
<div class="t " style="left:1026.80px;top:216.50px;"><span style="transform:scaleX(0.898);transform-origin:0 0">n/a</span></div>
<div class="t " style="left:1159.00px;top:216.50px;"><span style="transform:scaleX(0.898);transform-origin:0 0">n/a</span></div>
<div class="b" style="left:99.00px;top:246.00px;width:1098.00px;height:1.00px;background:#f0f0f4;"></div>
<div class="t " style="left:124.00px;top:232.62px;width:0;"><span style="position:absolute;left:0;transform:translateX(-50%) scaleX(0.817);">X</span></div>
<div class="t " style="right:993.30px;top:232.62px;"><span style="transform:scaleX(0.841);transform-origin:100% 0">-1</span></div>
<div class="t " style="right:932.00px;top:232.62px;"><span style="transform:scaleX(0.857);transform-origin:100% 0">0</span></div>
<div class="t " style="right:873.00px;top:232.62px;"><span style="transform:scaleX(0.857);transform-origin:100% 0">0</span></div>
<div class="t " style="left:338.30px;top:232.62px;"><span style="transform:scaleX(0.897);transform-origin:0 0">Project</span></div>
<div class="t " style="right:598.00px;top:232.62px;"><span style="transform:scaleX(0.857);transform-origin:100% 0">13</span></div>
<div class="t " style="right:526.00px;top:232.62px;"><span style="transform:scaleX(0.898);transform-origin:100% 0">n/a</span></div>
<div class="t " style="right:466.00px;top:232.62px;"><span style="transform:scaleX(0.898);transform-origin:100% 0">n/a</span></div>
<div class="t " style="right:390.00px;top:232.62px;"><span style="transform:scaleX(0.898);transform-origin:100% 0">n/a</span></div>
<div class="t " style="right:313.50px;top:232.62px;"><span style="transform:scaleX(0.898);transform-origin:100% 0">n/a</span></div>
<div class="t " style="right:271.30px;top:232.62px;"><span style="transform:scaleX(0.857);transform-origin:100% 0">1</span></div>
<div class="t " style="left:947.50px;top:232.62px;width:0;"><span style="position:absolute;left:0;transform:translateX(-50%) scaleX(0.817);">X</span></div>
<div class="t " style="left:966.00px;top:232.62px;"><span style="transform:scaleX(0.849);transform-origin:0 0">ID_3b987...</span></div>
<div class="t " style="left:1026.80px;top:232.62px;"><span style="transform:scaleX(0.858);transform-origin:0 0">[__info_as_detail__=COST...</span></div>
<div class="t " style="left:1159.00px;top:232.62px;"><span style="transform:scaleX(0.898);transform-origin:0 0">n/a</span></div>
<div class="b" style="left:99.00px;top:262.00px;width:1098.00px;height:1.00px;background:#f0f0f4;"></div>
<div class="t " style="left:124.00px;top:248.74px;width:0;"><span style="position:absolute;left:0;transform:translateX(-50%) scaleX(0.813);">-</span></div>
<div class="t " style="right:993.30px;top:248.74px;"><span style="transform:scaleX(0.841);transform-origin:100% 0">-1</span></div>
<div class="t " style="right:932.00px;top:248.74px;"><span style="transform:scaleX(0.857);transform-origin:100% 0">0</span></div>
<div class="t " style="right:873.00px;top:248.74px;"><span style="transform:scaleX(0.857);transform-origin:100% 0">0</span></div>
<div class="t " style="left:338.30px;top:248.74px;"><span style="transform:scaleX(0.893);transform-origin:0 0">Result</span></div>
<div class="t " style="right:598.00px;top:248.74px;"><span style="transform:scaleX(0.857);transform-origin:100% 0">13</span></div>
<div class="t " style="right:526.00px;top:248.74px;"><span style="transform:scaleX(0.898);transform-origin:100% 0">n/a</span></div>
<div class="t " style="right:466.00px;top:248.74px;"><span style="transform:scaleX(0.898);transform-origin:100% 0">n/a</span></div>
<div class="t " style="right:390.00px;top:248.74px;"><span style="transform:scaleX(0.857);transform-origin:100% 0">572</span></div>
<div class="t " style="right:313.50px;top:248.74px;"><span style="transform:scaleX(0.898);transform-origin:100% 0">n/a</span></div>
<div class="t " style="right:271.30px;top:248.74px;"><span style="transform:scaleX(0.857);transform-origin:100% 0">1</span></div>
<div class="t " style="left:947.50px;top:248.74px;width:0;"><span style="position:absolute;left:0;transform:translateX(-50%) scaleX(0.817);">X</span></div>
<div class="t " style="left:966.00px;top:248.74px;"><span style="transform:scaleX(0.868);transform-origin:0 0">X2_plan3...</span></div>
<div class="t " style="left:1026.80px;top:248.74px;"><span style="transform:scaleX(0.898);transform-origin:0 0">n/a</span></div>
<div class="t " style="left:1159.00px;top:248.74px;"><span style="transform:scaleX(0.888);transform-origin:0 0">rhel4...</span></div>
<div class="b" style="left:99.00px;top:278.00px;width:1098.00px;height:1.00px;background:#f0f0f4;"></div>
<div class="t " style="left:124.00px;top:264.86px;width:0;"><span style="position:absolute;left:0;transform:translateX(-50%) scaleX(0.813);">-</span></div>
<div class="t " style="right:993.30px;top:264.86px;"><span style="transform:scaleX(0.841);transform-origin:100% 0">-1</span></div>
<div class="t " style="right:932.00px;top:264.86px;"><span style="transform:scaleX(0.857);transform-origin:100% 0">0</span></div>
<div class="t " style="right:873.00px;top:264.86px;"><span style="transform:scaleX(0.857);transform-origin:100% 0">0</span></div>
<div class="t " style="left:338.30px;top:264.86px;"><span style="transform:scaleX(0.893);transform-origin:0 0">Result</span></div>
<div class="t " style="right:598.00px;top:264.86px;"><span style="transform:scaleX(0.857);transform-origin:100% 0">1</span></div>
<div class="t " style="right:526.00px;top:264.86px;"><span style="transform:scaleX(0.898);transform-origin:100% 0">n/a</span></div>
<div class="t " style="right:466.00px;top:264.86px;"><span style="transform:scaleX(0.898);transform-origin:100% 0">n/a</span></div>
<div class="t " style="right:390.00px;top:264.86px;"><span style="transform:scaleX(0.857);transform-origin:100% 0">200</span></div>
<div class="t " style="right:313.50px;top:264.86px;"><span style="transform:scaleX(0.898);transform-origin:100% 0">n/a</span></div>
<div class="t " style="right:271.30px;top:264.86px;"><span style="transform:scaleX(0.857);transform-origin:100% 0">1</span></div>
<div class="t " style="left:947.50px;top:264.86px;width:0;"><span style="position:absolute;left:0;transform:translateX(-50%) scaleX(0.817);">X</span></div>
<div class="t " style="left:966.00px;top:264.86px;"><span style="transform:scaleX(0.887);transform-origin:0 0">cs_plan3...</span></div>
<div class="t " style="left:1026.80px;top:264.86px;"><span style="transform:scaleX(0.898);transform-origin:0 0">n/a</span></div>
<div class="t " style="left:1159.00px;top:264.86px;"><span style="transform:scaleX(0.888);transform-origin:0 0">rhel4...</span></div>
<div class="b" style="left:99.00px;top:294.00px;width:1098.00px;height:1.00px;background:#f0f0f4;"></div>
<div class="t " style="left:124.00px;top:280.98px;width:0;"><span style="position:absolute;left:0;transform:translateX(-50%) scaleX(0.813);">-</span></div>
<div class="t " style="right:993.30px;top:280.98px;"><span style="transform:scaleX(0.841);transform-origin:100% 0">-1</span></div>
<div class="t " style="right:932.00px;top:280.98px;"><span style="transform:scaleX(0.857);transform-origin:100% 0">0</span></div>
<div class="t " style="right:873.00px;top:280.98px;"><span style="transform:scaleX(0.857);transform-origin:100% 0">0</span></div>
<div class="t " style="left:338.30px;top:280.98px;"><span style="transform:scaleX(0.893);transform-origin:0 0">Result</span></div>
<div class="t " style="right:598.00px;top:280.98px;"><span style="transform:scaleX(0.857);transform-origin:100% 0">1</span></div>
<div class="t " style="right:526.00px;top:280.98px;"><span style="transform:scaleX(0.898);transform-origin:100% 0">n/a</span></div>
<div class="t " style="right:466.00px;top:280.98px;"><span style="transform:scaleX(0.898);transform-origin:100% 0">n/a</span></div>
<div class="t " style="right:390.00px;top:280.98px;"><span style="transform:scaleX(0.898);transform-origin:100% 0">n/a</span></div>
<div class="t " style="right:313.50px;top:280.98px;"><span style="transform:scaleX(0.898);transform-origin:100% 0">n/a</span></div>
<div class="t " style="right:271.30px;top:280.98px;"><span style="transform:scaleX(0.857);transform-origin:100% 0">1</span></div>
<div class="t " style="left:947.50px;top:280.98px;width:0;"><span style="position:absolute;left:0;transform:translateX(-50%) scaleX(0.817);">X</span></div>
<div class="t " style="left:966.00px;top:280.98px;"><span style="transform:scaleX(0.887);transform-origin:0 0">cs_plan4...</span></div>
<div class="t " style="left:1026.80px;top:280.98px;"><span style="transform:scaleX(0.898);transform-origin:0 0">n/a</span></div>
<div class="t " style="left:1159.00px;top:280.98px;"><span style="transform:scaleX(0.898);transform-origin:0 0">n/a</span></div>
<div class="b" style="left:99.00px;top:310.00px;width:1098.00px;height:1.00px;background:#f0f0f4;"></div>
<div class="t " style="left:124.00px;top:297.10px;width:0;"><span style="position:absolute;left:0;transform:translateX(-50%) scaleX(0.813);">-</span></div>
<div class="t " style="right:993.30px;top:297.10px;"><span style="transform:scaleX(0.841);transform-origin:100% 0">-1</span></div>
<div class="t " style="right:932.00px;top:297.10px;"><span style="transform:scaleX(0.857);transform-origin:100% 0">0</span></div>
<div class="t " style="right:873.00px;top:297.10px;"><span style="transform:scaleX(0.857);transform-origin:100% 0">0</span></div>
<div class="t " style="left:338.30px;top:297.10px;"><span style="transform:scaleX(0.893);transform-origin:0 0">Result</span></div>
<div class="t " style="right:598.00px;top:297.10px;"><span style="transform:scaleX(0.857);transform-origin:100% 0">0</span></div>
<div class="t " style="right:526.00px;top:297.10px;"><span style="transform:scaleX(0.898);transform-origin:100% 0">n/a</span></div>
<div class="t " style="right:466.00px;top:297.10px;"><span style="transform:scaleX(0.898);transform-origin:100% 0">n/a</span></div>
<div class="t " style="right:390.00px;top:297.10px;"><span style="transform:scaleX(0.898);transform-origin:100% 0">n/a</span></div>
<div class="t " style="right:313.50px;top:297.10px;"><span style="transform:scaleX(0.898);transform-origin:100% 0">n/a</span></div>
<div class="t " style="right:271.30px;top:297.10px;"><span style="transform:scaleX(0.857);transform-origin:100% 0">1</span></div>
<div class="t " style="left:947.50px;top:297.10px;width:0;"><span style="position:absolute;left:0;transform:translateX(-50%) scaleX(0.813);">-</span></div>
<div class="t " style="left:966.00px;top:297.10px;"><span style="transform:scaleX(0.887);transform-origin:0 0">cs_plan5...</span></div>
<div class="t " style="left:1026.80px;top:297.10px;"><span style="transform:scaleX(0.898);transform-origin:0 0">n/a</span></div>
<div class="t " style="left:1159.00px;top:297.10px;"><span style="transform:scaleX(0.898);transform-origin:0 0">n/a</span></div>
<div class="b" style="left:99.00px;top:326.00px;width:1098.00px;height:1.00px;background:#f0f0f4;"></div>
<div class="t " style="left:124.00px;top:313.22px;width:0;"><span style="position:absolute;left:0;transform:translateX(-50%) scaleX(0.813);">-</span></div>
<div class="t " style="right:993.30px;top:313.22px;"><span style="transform:scaleX(0.841);transform-origin:100% 0">-1</span></div>
<div class="t " style="right:932.00px;top:313.22px;"><span style="transform:scaleX(0.857);transform-origin:100% 0">0</span></div>
<div class="t " style="right:873.00px;top:313.22px;"><span style="transform:scaleX(0.857);transform-origin:100% 0">0</span></div>
<div class="t " style="left:338.30px;top:313.22px;"><span style="transform:scaleX(0.893);transform-origin:0 0">Result</span></div>
<div class="t " style="right:598.00px;top:313.22px;"><span style="transform:scaleX(0.898);transform-origin:100% 0">n/a</span></div>
<div class="t " style="right:526.00px;top:313.22px;"><span style="transform:scaleX(0.898);transform-origin:100% 0">n/a</span></div>
<div class="t " style="right:466.00px;top:313.22px;"><span style="transform:scaleX(0.898);transform-origin:100% 0">n/a</span></div>
<div class="t " style="right:390.00px;top:313.22px;"><span style="transform:scaleX(0.898);transform-origin:100% 0">n/a</span></div>
<div class="t " style="right:313.50px;top:313.22px;"><span style="transform:scaleX(0.898);transform-origin:100% 0">n/a</span></div>
<div class="t " style="right:271.30px;top:313.22px;"><span style="transform:scaleX(0.857);transform-origin:100% 0">1</span></div>
<div class="t " style="left:947.50px;top:313.22px;width:0;"><span style="position:absolute;left:0;transform:translateX(-50%) scaleX(0.817);">X</span></div>
<div class="t " style="left:966.00px;top:313.22px;"><span style="transform:scaleX(0.868);transform-origin:0 0">19ac5908...</span></div>
<div class="t " style="left:1026.80px;top:313.22px;"><span style="transform:scaleX(0.898);transform-origin:0 0">n/a</span></div>
<div class="t " style="left:1159.00px;top:313.22px;"><span style="transform:scaleX(0.898);transform-origin:0 0">n/a</span></div>
<div class="b" style="left:99.00px;top:342.00px;width:1098.00px;height:1.00px;background:#f0f0f4;"></div>
<div class="t " style="left:124.00px;top:329.34px;width:0;"><span style="position:absolute;left:0;transform:translateX(-50%) scaleX(0.817);">X</span></div>
<div class="t " style="right:993.30px;top:329.34px;"><span style="transform:scaleX(0.857);transform-origin:100% 0">72</span></div>
<div class="t " style="right:932.00px;top:329.34px;"><span style="transform:scaleX(0.857);transform-origin:100% 0">4</span></div>
<div class="t " style="right:873.00px;top:329.34px;"><span style="transform:scaleX(0.857);transform-origin:100% 0">1</span></div>
<div class="t " style="left:338.30px;top:329.34px;"><span style="transform:scaleX(0.904);transform-origin:0 0">Column Search</span></div>
<div class="t " style="right:598.00px;top:329.34px;"><span style="transform:scaleX(0.898);transform-origin:100% 0">n/a</span></div>
<div class="t " style="right:526.00px;top:329.34px;"><span style="transform:scaleX(0.857);transform-origin:100% 0">13</span></div>
<div class="t " style="right:466.00px;top:329.34px;"><span style="transform:scaleX(0.898);transform-origin:100% 0">n/a</span></div>
<div class="t " style="right:390.00px;top:329.34px;"><span style="transform:scaleX(0.898);transform-origin:100% 0">n/a</span></div>
<div class="t " style="right:313.50px;top:329.34px;"><span style="transform:scaleX(0.898);transform-origin:100% 0">n/a</span></div>
<div class="t " style="right:271.30px;top:329.34px;"><span style="transform:scaleX(0.857);transform-origin:100% 0">1</span></div>
<div class="t " style="left:947.50px;top:329.34px;width:0;"><span style="position:absolute;left:0;transform:translateX(-50%) scaleX(0.817);">X</span></div>
<div class="t " style="left:966.00px;top:329.34px;"><span style="transform:scaleX(0.838);transform-origin:0 0">ID_22D27...</span></div>
<div class="t " style="left:1026.80px;top:329.34px;"><span style="transform:scaleX(0.865);transform-origin:0 0">[Projected Cols=CCGRP....</span></div>
<div class="t " style="left:1159.00px;top:329.34px;"><span style="transform:scaleX(0.888);transform-origin:0 0">rhel4...</span></div>
<div class="b" style="left:99.00px;top:358.00px;width:1098.00px;height:1.00px;background:#f0f0f4;"></div>
<div class="t " style="left:124.00px;top:345.46px;width:0;"><span style="position:absolute;left:0;transform:translateX(-50%) scaleX(0.817);">X</span></div>
<div class="t " style="right:993.30px;top:345.46px;"><span style="transform:scaleX(0.857);transform-origin:100% 0">97</span></div>
<div class="t " style="right:932.00px;top:345.46px;"><span style="transform:scaleX(0.857);transform-origin:100% 0">1</span></div>
<div class="t " style="right:873.00px;top:345.46px;"><span style="transform:scaleX(0.857);transform-origin:100% 0">1</span></div>
<div class="t " style="left:338.30px;top:345.46px;"><span style="transform:scaleX(0.882);transform-origin:0 0">JEEvalPrecond</span></div>
<div class="t " style="left:449.60px;top:345.46px;"><span style="transform:scaleX(0.820);transform-origin:0 0">ZDRCOSTCENTR...</span></div>
<div class="t " style="right:598.00px;top:345.46px;"><span style="transform:scaleX(0.898);transform-origin:100% 0">n/a</span></div>
<div class="t " style="right:526.00px;top:345.46px;"><span style="transform:scaleX(0.857);transform-origin:100% 0">1</span></div>
<div class="t " style="right:466.00px;top:345.46px;"><span style="transform:scaleX(0.898);transform-origin:100% 0">n/a</span></div>
<div class="t " style="right:390.00px;top:345.46px;"><span style="transform:scaleX(0.898);transform-origin:100% 0">n/a</span></div>
<div class="t " style="right:313.50px;top:345.46px;"><span style="transform:scaleX(0.857);transform-origin:100% 0">200</span></div>
<div class="t " style="right:271.30px;top:345.46px;"><span style="transform:scaleX(0.857);transform-origin:100% 0">1</span></div>
<div class="t " style="left:947.50px;top:345.46px;width:0;"><span style="position:absolute;left:0;transform:translateX(-50%) scaleX(0.817);">X</span></div>
<div class="t " style="left:966.00px;top:345.46px;"><span style="transform:scaleX(0.868);transform-origin:0 0">X2_plan3...</span></div>
<div class="t " style="left:1026.80px;top:345.46px;"><span style="transform:scaleX(0.880);transform-origin:0 0">[table processed=ZDRCO...</span></div>
<div class="t " style="left:1159.00px;top:345.46px;"><span style="transform:scaleX(0.888);transform-origin:0 0">rhel4...</span></div>
<div class="b" style="left:99.00px;top:375.00px;width:1098.00px;height:1.00px;background:#f0f0f4;"></div>
<div class="t " style="left:124.00px;top:361.58px;width:0;"><span style="position:absolute;left:0;transform:translateX(-50%) scaleX(0.817);">X</span></div>
<div class="t " style="right:993.30px;top:361.58px;"><span style="transform:scaleX(0.857);transform-origin:100% 0">97</span></div>
<div class="t " style="right:932.00px;top:361.58px;"><span style="transform:scaleX(0.857);transform-origin:100% 0">0</span></div>
<div class="t " style="right:873.00px;top:361.58px;"><span style="transform:scaleX(0.857);transform-origin:100% 0">0</span></div>
<div class="t " style="left:338.30px;top:361.58px;"><span style="transform:scaleX(0.905);transform-origin:0 0">Dynamic Search</span></div>
<div class="t " style="left:449.60px;top:361.58px;"><span style="transform:scaleX(0.820);transform-origin:0 0">ZDRCOSTCENTR...</span></div>
<div class="t " style="right:598.00px;top:361.58px;"><span style="transform:scaleX(0.898);transform-origin:100% 0">n/a</span></div>
<div class="t " style="right:526.00px;top:361.58px;"><span style="transform:scaleX(0.857);transform-origin:100% 0">1</span></div>
<div class="t " style="right:466.00px;top:361.58px;"><span style="transform:scaleX(0.898);transform-origin:100% 0">n/a</span></div>
<div class="t " style="right:390.00px;top:361.58px;"><span style="transform:scaleX(0.898);transform-origin:100% 0">n/a</span></div>
<div class="t " style="right:313.50px;top:361.58px;"><span style="transform:scaleX(0.857);transform-origin:100% 0">200</span></div>
<div class="t " style="right:271.30px;top:361.58px;"><span style="transform:scaleX(0.857);transform-origin:100% 0">1</span></div>
<div class="t " style="left:947.50px;top:361.58px;width:0;"><span style="position:absolute;left:0;transform:translateX(-50%) scaleX(0.817);">X</span></div>
<div class="t " style="left:966.00px;top:361.58px;"><span style="transform:scaleX(0.887);transform-origin:0 0">cs_plan3...</span></div>
<div class="t " style="left:1026.80px;top:361.58px;"><span style="transform:scaleX(0.873);transform-origin:0 0">[__info_as_detail__=Estim...</span></div>
<div class="t " style="left:1159.00px;top:361.58px;"><span style="transform:scaleX(0.888);transform-origin:0 0">rhel4...</span></div>
<div class="b" style="left:99.00px;top:391.00px;width:1098.00px;height:1.00px;background:#f0f0f4;"></div>
<div class="t " style="left:124.00px;top:377.70px;width:0;"><span style="position:absolute;left:0;transform:translateX(-50%) scaleX(0.817);">X</span></div>
<div class="t " style="right:993.30px;top:377.70px;"><span style="transform:scaleX(0.857);transform-origin:100% 0">97</span></div>
<div class="t " style="right:932.00px;top:377.70px;"><span style="transform:scaleX(0.857);transform-origin:100% 0">0</span></div>
<div class="t " style="right:873.00px;top:377.70px;"><span style="transform:scaleX(0.857);transform-origin:100% 0">0</span></div>
<div class="t " style="left:338.30px;top:377.70px;"><span style="transform:scaleX(0.905);transform-origin:0 0">Basic Predicate</span></div>
<div class="t " style="left:449.60px;top:377.70px;"><span style="transform:scaleX(0.820);transform-origin:0 0">ZDRCOSTCENTR...</span></div>
<div class="t " style="right:598.00px;top:377.70px;"><span style="transform:scaleX(0.898);transform-origin:100% 0">n/a</span></div>
<div class="t " style="right:526.00px;top:377.70px;"><span style="transform:scaleX(0.857);transform-origin:100% 0">1</span></div>
<div class="t " style="right:466.00px;top:377.70px;"><span style="transform:scaleX(0.898);transform-origin:100% 0">n/a</span></div>
<div class="t " style="right:390.00px;top:377.70px;"><span style="transform:scaleX(0.898);transform-origin:100% 0">n/a</span></div>
<div class="t " style="right:313.50px;top:377.70px;"><span style="transform:scaleX(0.898);transform-origin:100% 0">n/a</span></div>
<div class="t " style="right:271.30px;top:377.70px;"><span style="transform:scaleX(0.857);transform-origin:100% 0">1</span></div>
<div class="t " style="left:947.50px;top:377.70px;width:0;"><span style="position:absolute;left:0;transform:translateX(-50%) scaleX(0.817);">X</span></div>
<div class="t " style="left:966.00px;top:377.70px;"><span style="transform:scaleX(0.887);transform-origin:0 0">cs_plan4...</span></div>
<div class="t " style="left:1026.80px;top:377.70px;"><span style="transform:scaleX(0.902);transform-origin:0 0">[Estimated result size=1, I...</span></div>
<div class="t " style="left:1159.00px;top:377.70px;"><span style="transform:scaleX(0.888);transform-origin:0 0">rhel4...</span></div>
<div class="b" style="left:99.00px;top:407.00px;width:1098.00px;height:1.00px;background:#f0f0f4;"></div>
<div class="t " style="left:124.00px;top:393.82px;width:0;"><span style="position:absolute;left:0;transform:translateX(-50%) scaleX(0.817);">X</span></div>
<div class="t " style="right:993.30px;top:393.82px;"><span style="transform:scaleX(0.857);transform-origin:100% 0">97</span></div>
<div class="t " style="right:932.00px;top:393.82px;"><span style="transform:scaleX(0.857);transform-origin:100% 0">0</span></div>
<div class="t " style="right:873.00px;top:393.82px;"><span style="transform:scaleX(0.857);transform-origin:100% 0">0</span></div>
<div class="t " style="left:338.30px;top:393.82px;"><span style="transform:scaleX(0.901);transform-origin:0 0">Search On Delta 1</span></div>
<div class="t " style="left:449.60px;top:393.82px;"><span style="transform:scaleX(0.820);transform-origin:0 0">ZDRCOSTCENTR...</span></div>
<div class="t " style="right:598.00px;top:393.82px;"><span style="transform:scaleX(0.898);transform-origin:100% 0">n/a</span></div>
<div class="t " style="right:526.00px;top:393.82px;"><span style="transform:scaleX(0.857);transform-origin:100% 0">0</span></div>
<div class="t " style="right:466.00px;top:393.82px;"><span style="transform:scaleX(0.898);transform-origin:100% 0">n/a</span></div>
<div class="t " style="right:390.00px;top:393.82px;"><span style="transform:scaleX(0.898);transform-origin:100% 0">n/a</span></div>
<div class="t " style="right:313.50px;top:393.82px;"><span style="transform:scaleX(0.898);transform-origin:100% 0">n/a</span></div>
<div class="t " style="right:271.30px;top:393.82px;"><span style="transform:scaleX(0.857);transform-origin:100% 0">1</span></div>
<div class="t " style="left:947.50px;top:393.82px;width:0;"><span style="position:absolute;left:0;transform:translateX(-50%) scaleX(0.813);">-</span></div>
<div class="t " style="left:966.00px;top:393.82px;"><span style="transform:scaleX(0.887);transform-origin:0 0">cs_plan5...</span></div>
<div class="t " style="left:1026.80px;top:393.82px;"><span style="transform:scaleX(0.912);transform-origin:0 0">[Inverted index=no info ...</span></div>
<div class="t " style="left:1159.00px;top:393.82px;"><span style="transform:scaleX(0.888);transform-origin:0 0">rhel4...</span></div>
<div class="b" style="left:99.00px;top:423.00px;width:1098.00px;height:1.00px;background:#f0f0f4;"></div>
<div class="t " style="left:124.00px;top:409.94px;width:0;"><span style="position:absolute;left:0;transform:translateX(-50%) scaleX(0.817);">X</span></div>
<div class="t " style="right:993.30px;top:409.94px;"><span style="transform:scaleX(0.857);transform-origin:100% 0">97</span></div>
<div class="t " style="right:932.00px;top:409.94px;"><span style="transform:scaleX(0.857);transform-origin:100% 0">0</span></div>
<div class="t " style="right:873.00px;top:409.94px;"><span style="transform:scaleX(0.857);transform-origin:100% 0">0</span></div>
<div class="t " style="left:338.30px;top:409.94px;"><span style="transform:scaleX(0.860);transform-origin:0 0">JEStep1</span></div>
<div class="t " style="left:449.60px;top:409.94px;"><span style="transform:scaleX(0.820);transform-origin:0 0">ZDRCOSTCENTR...</span></div>
<div class="t " style="right:598.00px;top:409.94px;"><span style="transform:scaleX(0.857);transform-origin:100% 0">1</span></div>
<div class="t " style="right:526.00px;top:409.94px;"><span style="transform:scaleX(0.857);transform-origin:100% 0">1</span></div>
<div class="t " style="right:466.00px;top:409.94px;"><span style="transform:scaleX(0.857);transform-origin:100% 0">1</span></div>
<div class="t " style="right:390.00px;top:409.94px;"><span style="transform:scaleX(0.857);transform-origin:100% 0">200</span></div>
<div class="t " style="right:313.50px;top:409.94px;"><span style="transform:scaleX(0.857);transform-origin:100% 0">896</span></div>
<div class="t " style="right:271.30px;top:409.94px;"><span style="transform:scaleX(0.857);transform-origin:100% 0">1</span></div>
<div class="t " style="left:947.50px;top:409.94px;width:0;"><span style="position:absolute;left:0;transform:translateX(-50%) scaleX(0.817);">X</span></div>
<div class="t " style="left:966.00px;top:409.94px;"><span style="transform:scaleX(0.868);transform-origin:0 0">X2_plan3...</span></div>
<div class="t " style="left:1026.80px;top:409.94px;"><span style="transform:scaleX(0.873);transform-origin:0 0">[__info_as_detail__=Semij...</span></div>
<div class="t " style="left:1159.00px;top:409.94px;"><span style="transform:scaleX(0.888);transform-origin:0 0">rhel4...</span></div>
<div class="b" style="left:99.00px;top:439.00px;width:1098.00px;height:1.00px;background:#f0f0f4;"></div>
<div class="t " style="left:124.00px;top:426.06px;width:0;"><span style="position:absolute;left:0;transform:translateX(-50%) scaleX(0.817);">X</span></div>
<div class="t " style="right:993.30px;top:426.06px;"><span style="transform:scaleX(0.857);transform-origin:100% 0">98</span></div>
<div class="t " style="right:932.00px;top:426.06px;"><span style="transform:scaleX(0.857);transform-origin:100% 0">0</span></div>
<div class="t " style="right:873.00px;top:426.06px;"><span style="transform:scaleX(0.857);transform-origin:100% 0">0</span></div>
<div class="t " style="left:338.30px;top:426.06px;"><span style="transform:scaleX(0.860);transform-origin:0 0">JEStep4</span></div>
<div class="t " style="left:449.60px;top:426.06px;"><span style="transform:scaleX(0.820);transform-origin:0 0">ZDRCOSTCENTR...</span></div>
<div class="t " style="right:598.00px;top:426.06px;"><span style="transform:scaleX(0.857);transform-origin:100% 0">2</span></div>
<div class="t " style="right:526.00px;top:426.06px;"><span style="transform:scaleX(0.857);transform-origin:100% 0">1</span></div>
<div class="t " style="right:466.00px;top:426.06px;"><span style="transform:scaleX(0.848);transform-origin:100% 0">0,5</span></div>
<div class="t " style="right:390.00px;top:426.06px;"><span style="transform:scaleX(0.856);transform-origin:100% 0">1.392</span></div>
<div class="t " style="right:313.50px;top:426.06px;"><span style="transform:scaleX(0.857);transform-origin:100% 0">896</span></div>
<div class="t " style="right:271.30px;top:426.06px;"><span style="transform:scaleX(0.857);transform-origin:100% 0">2</span></div>
<div class="t " style="left:947.50px;top:426.06px;width:0;"><span style="position:absolute;left:0;transform:translateX(-50%) scaleX(0.813);">-</span></div>
<div class="t " style="left:966.00px;top:426.06px;"><span style="transform:scaleX(0.868);transform-origin:0 0">X2_plan3...</span></div>
<div class="t " style="left:1026.80px;top:426.06px;"><span style="transform:scaleX(0.873);transform-origin:0 0">[__info_as_detail__=Semij...</span></div>
<div class="t " style="left:1159.00px;top:426.06px;"><span style="transform:scaleX(0.888);transform-origin:0 0">rhel4...</span></div>
<div class="b" style="left:99.00px;top:455.00px;width:1098.00px;height:1.00px;background:#f0f0f4;"></div>
<div class="t " style="left:124.00px;top:442.18px;width:0;"><span style="position:absolute;left:0;transform:translateX(-50%) scaleX(0.817);">X</span></div>
<div class="t " style="right:993.30px;top:442.18px;"><span style="transform:scaleX(0.857);transform-origin:100% 0">98</span></div>
<div class="t " style="right:932.00px;top:442.18px;"><span style="transform:scaleX(0.857);transform-origin:100% 0">1</span></div>
<div class="t " style="right:873.00px;top:442.18px;"><span style="transform:scaleX(0.857);transform-origin:100% 0">1</span></div>
<div class="t " style="left:338.30px;top:442.18px;"><span style="transform:scaleX(0.860);transform-origin:0 0">JEStep2</span></div>
<div class="t " style="left:449.60px;top:442.18px;"><span style="transform:scaleX(0.820);transform-origin:0 0">ZDRCOSTCENTR...</span></div>
<div class="t " style="right:598.00px;top:442.18px;"><span style="transform:scaleX(0.857);transform-origin:100% 0">1</span></div>
<div class="t " style="right:526.00px;top:442.18px;"><span style="transform:scaleX(0.857);transform-origin:100% 0">3</span></div>
<div class="t " style="right:466.00px;top:442.18px;"><span style="transform:scaleX(0.857);transform-origin:100% 0">3</span></div>
<div class="t " style="right:390.00px;top:442.18px;"><span style="transform:scaleX(0.857);transform-origin:100% 0">488</span></div>
<div class="t " style="right:313.50px;top:442.18px;"><span style="transform:scaleX(0.857);transform-origin:100% 0">936</span></div>
<div class="t " style="right:271.30px;top:442.18px;"><span style="transform:scaleX(0.857);transform-origin:100% 0">1</span></div>
<div class="t " style="left:947.50px;top:442.18px;width:0;"><span style="position:absolute;left:0;transform:translateX(-50%) scaleX(0.817);">X</span></div>
<div class="t " style="left:966.00px;top:442.18px;"><span style="transform:scaleX(0.868);transform-origin:0 0">X2_plan3...</span></div>
<div class="t " style="left:1026.80px;top:442.18px;"><span style="transform:scaleX(0.890);transform-origin:0 0">[PerformanceTrace={"det...</span></div>
<div class="t " style="left:1159.00px;top:442.18px;"><span style="transform:scaleX(0.888);transform-origin:0 0">rhel4...</span></div>
<div class="b" style="left:99.00px;top:471.00px;width:1098.00px;height:1.00px;background:#f0f0f4;"></div>
<div class="t " style="left:124.00px;top:458.30px;width:0;"><span style="position:absolute;left:0;transform:translateX(-50%) scaleX(0.817);">X</span></div>
<div class="t " style="right:993.30px;top:458.30px;"><span style="transform:scaleX(0.857);transform-origin:100% 0">98</span></div>
<div class="t " style="right:932.00px;top:458.30px;"><span style="transform:scaleX(0.857);transform-origin:100% 0">0</span></div>
<div class="t " style="right:873.00px;top:458.30px;"><span style="transform:scaleX(0.857);transform-origin:100% 0">0</span></div>
<div class="t " style="left:338.30px;top:458.30px;"><span style="transform:scaleX(0.868);transform-origin:0 0">JEStep3b</span></div>
<div class="t " style="left:449.60px;top:458.30px;"><span style="transform:scaleX(0.820);transform-origin:0 0">ZDRCOSTCENTR...</span></div>
<div class="t " style="right:598.00px;top:458.30px;"><span style="transform:scaleX(0.857);transform-origin:100% 0">3</span></div>
<div class="t " style="right:526.00px;top:458.30px;"><span style="transform:scaleX(0.857);transform-origin:100% 0">1</span></div>
<div class="t " style="right:466.00px;top:458.30px;"><span style="transform:scaleX(0.848);transform-origin:100% 0">0,3</span></div>
<div class="t " style="right:390.00px;top:458.30px;"><span style="transform:scaleX(0.857);transform-origin:100% 0">936</span></div>
<div class="t " style="right:313.50px;top:458.30px;"><span style="transform:scaleX(0.857);transform-origin:100% 0">496</span></div>
<div class="t " style="right:271.30px;top:458.30px;"><span style="transform:scaleX(0.857);transform-origin:100% 0">2</span></div>
<div class="t " style="left:947.50px;top:458.30px;width:0;"><span style="position:absolute;left:0;transform:translateX(-50%) scaleX(0.813);">-</span></div>
<div class="t " style="left:966.00px;top:458.30px;"><span style="transform:scaleX(0.868);transform-origin:0 0">X2_plan3...</span></div>
<div class="t " style="left:1026.80px;top:458.30px;"><span style="transform:scaleX(0.873);transform-origin:0 0">[__info_as_detail__=Semij...</span></div>
<div class="t " style="left:1159.00px;top:458.30px;"><span style="transform:scaleX(0.888);transform-origin:0 0">rhel4...</span></div>
<div class="b" style="left:99.00px;top:487.00px;width:1098.00px;height:1.00px;background:#f0f0f4;"></div>
<div class="t " style="left:124.00px;top:474.42px;width:0;"><span style="position:absolute;left:0;transform:translateX(-50%) scaleX(0.817);">X</span></div>
<div class="t " style="right:993.30px;top:474.42px;"><span style="transform:scaleX(0.857);transform-origin:100% 0">98</span></div>
<div class="t " style="right:932.00px;top:474.42px;"><span style="transform:scaleX(0.857);transform-origin:100% 0">0</span></div>
<div class="t " style="right:873.00px;top:474.42px;"><span style="transform:scaleX(0.857);transform-origin:100% 0">0</span></div>
<div class="t " style="left:338.30px;top:474.42px;"><span style="transform:scaleX(0.860);transform-origin:0 0">JEStep2</span></div>
<div class="t " style="left:449.60px;top:474.42px;"><span style="transform:scaleX(0.820);transform-origin:0 0">ZDRCOSTLINEIT...</span></div>
<div class="t " style="right:598.00px;top:474.42px;"><span style="transform:scaleX(0.857);transform-origin:100% 0">3</span></div>
<div class="t " style="right:526.00px;top:474.42px;"><span style="transform:scaleX(0.857);transform-origin:100% 0">13</span></div>
<div class="t " style="right:466.00px;top:474.42px;"><span style="transform:scaleX(0.848);transform-origin:100% 0">4,3</span></div>
<div class="t " style="right:390.00px;top:474.42px;"><span style="transform:scaleX(0.857);transform-origin:100% 0">496</span></div>
<div class="t " style="right:313.50px;top:474.42px;"><span style="transform:scaleX(0.857);transform-origin:100% 0">992</span></div>
<div class="t " style="right:271.30px;top:474.42px;"><span style="transform:scaleX(0.857);transform-origin:100% 0">1</span></div>
<div class="t " style="left:947.50px;top:474.42px;width:0;"><span style="position:absolute;left:0;transform:translateX(-50%) scaleX(0.817);">X</span></div>
<div class="t " style="left:966.00px;top:474.42px;"><span style="transform:scaleX(0.868);transform-origin:0 0">X2_plan3...</span></div>
<div class="t " style="left:1026.80px;top:474.42px;"><span style="transform:scaleX(0.912);transform-origin:0 0">[table/column processed...</span></div>
<div class="t " style="left:1159.00px;top:474.42px;"><span style="transform:scaleX(0.888);transform-origin:0 0">rhel4...</span></div>
<div class="b" style="left:99.00px;top:504.00px;width:1098.00px;height:1.00px;background:#f0f0f4;"></div>
<div class="t " style="left:124.00px;top:490.54px;width:0;"><span style="position:absolute;left:0;transform:translateX(-50%) scaleX(0.817);">X</span></div>
<div class="t " style="right:993.30px;top:490.54px;"><span style="transform:scaleX(0.857);transform-origin:100% 0">98</span></div>
<div class="t " style="right:932.00px;top:490.54px;"><span style="transform:scaleX(0.857);transform-origin:100% 0">0</span></div>
<div class="t " style="right:873.00px;top:490.54px;"><span style="transform:scaleX(0.857);transform-origin:100% 0">0</span></div>
<div class="t " style="left:338.30px;top:490.54px;"><span style="transform:scaleX(0.860);transform-origin:0 0">JEStep1</span></div>
<div class="t " style="left:449.60px;top:490.54px;"><span style="transform:scaleX(0.820);transform-origin:0 0">ZDRCOSTCENTR...</span></div>
<div class="t " style="right:598.00px;top:490.54px;"><span style="transform:scaleX(0.857);transform-origin:100% 0">3</span></div>
<div class="t " style="right:526.00px;top:490.54px;"><span style="transform:scaleX(0.857);transform-origin:100% 0">3</span></div>
<div class="t " style="right:466.00px;top:490.54px;"><span style="transform:scaleX(0.857);transform-origin:100% 0">1</span></div>
<div class="t " style="right:390.00px;top:490.54px;"><span style="transform:scaleX(0.857);transform-origin:100% 0">936</span></div>
<div class="t " style="right:313.50px;top:490.54px;"><span style="transform:scaleX(0.857);transform-origin:100% 0">912</span></div>
<div class="t " style="right:271.30px;top:490.54px;"><span style="transform:scaleX(0.857);transform-origin:100% 0">1</span></div>
<div class="t " style="left:947.50px;top:490.54px;width:0;"><span style="position:absolute;left:0;transform:translateX(-50%) scaleX(0.817);">X</span></div>
<div class="t " style="left:966.00px;top:490.54px;"><span style="transform:scaleX(0.868);transform-origin:0 0">X2_plan3...</span></div>
<div class="t " style="left:1026.80px;top:490.54px;"><span style="transform:scaleX(0.912);transform-origin:0 0">[table/column processed...</span></div>
<div class="t " style="left:1159.00px;top:490.54px;"><span style="transform:scaleX(0.888);transform-origin:0 0">rhel4...</span></div>
<div class="b" style="left:99.00px;top:520.00px;width:1098.00px;height:1.00px;background:#f0f0f4;"></div>
<div class="t " style="left:124.00px;top:506.66px;width:0;"><span style="position:absolute;left:0;transform:translateX(-50%) scaleX(0.817);">X</span></div>
<div class="t " style="right:993.30px;top:506.66px;"><span style="transform:scaleX(0.857);transform-origin:100% 0">99</span></div>
<div class="t " style="right:932.00px;top:506.66px;"><span style="transform:scaleX(0.857);transform-origin:100% 0">0</span></div>
<div class="t " style="right:873.00px;top:506.66px;"><span style="transform:scaleX(0.857);transform-origin:100% 0">0</span></div>
<div class="t " style="left:338.30px;top:506.66px;"><span style="transform:scaleX(0.868);transform-origin:0 0">JEStep3b</span></div>
<div class="t " style="left:449.60px;top:506.66px;"><span style="transform:scaleX(0.820);transform-origin:0 0">ZDRCOSTLINEIT...</span></div>
<div class="t " style="right:598.00px;top:506.66px;"><span style="transform:scaleX(0.857);transform-origin:100% 0">13</span></div>
<div class="t " style="right:526.00px;top:506.66px;"><span style="transform:scaleX(0.857);transform-origin:100% 0">3</span></div>
<div class="t " style="right:466.00px;top:506.66px;"><span style="transform:scaleX(0.848);transform-origin:100% 0">0,2</span></div>
<div class="t " style="right:390.00px;top:506.66px;"><span style="transform:scaleX(0.857);transform-origin:100% 0">992</span></div>
<div class="t " style="right:313.50px;top:506.66px;"><span style="transform:scaleX(0.857);transform-origin:100% 0">536</span></div>
<div class="t " style="right:271.30px;top:506.66px;"><span style="transform:scaleX(0.857);transform-origin:100% 0">2</span></div>
<div class="t " style="left:947.50px;top:506.66px;width:0;"><span style="position:absolute;left:0;transform:translateX(-50%) scaleX(0.817);">X</span></div>
<div class="t " style="left:966.00px;top:506.66px;"><span style="transform:scaleX(0.868);transform-origin:0 0">X2_plan3...</span></div>
<div class="t " style="left:1026.80px;top:506.66px;"><span style="transform:scaleX(0.873);transform-origin:0 0">[__info_as_detail__=Semij...</span></div>
<div class="t " style="left:1159.00px;top:506.66px;"><span style="transform:scaleX(0.888);transform-origin:0 0">rhel4...</span></div>
<div class="b" style="left:99.00px;top:536.00px;width:1098.00px;height:1.00px;background:#f0f0f4;"></div>
<div class="t " style="left:124.00px;top:522.78px;width:0;"><span style="position:absolute;left:0;transform:translateX(-50%) scaleX(0.817);">X</span></div>
<div class="t " style="right:993.30px;top:522.78px;"><span style="transform:scaleX(0.857);transform-origin:100% 0">99</span></div>
<div class="t " style="right:932.00px;top:522.78px;"><span style="transform:scaleX(0.857);transform-origin:100% 0">0</span></div>
<div class="t " style="right:873.00px;top:522.78px;"><span style="transform:scaleX(0.857);transform-origin:100% 0">0</span></div>
<div class="t " style="left:338.30px;top:522.78px;"><span style="transform:scaleX(0.860);transform-origin:0 0">JEStep4</span></div>
<div class="t " style="left:449.60px;top:522.78px;"><span style="transform:scaleX(0.820);transform-origin:0 0">ZDRCOSTCENTR...</span></div>
<div class="t " style="right:598.00px;top:522.78px;"><span style="transform:scaleX(0.857);transform-origin:100% 0">6</span></div>
<div class="t " style="right:526.00px;top:522.78px;"><span style="transform:scaleX(0.857);transform-origin:100% 0">3</span></div>
<div class="t " style="right:466.00px;top:522.78px;"><span style="transform:scaleX(0.848);transform-origin:100% 0">0,5</span></div>
<div class="t " style="right:390.00px;top:522.78px;"><span style="transform:scaleX(0.856);transform-origin:100% 0">1.448</span></div>
<div class="t " style="right:313.50px;top:522.78px;"><span style="transform:scaleX(0.857);transform-origin:100% 0">912</span></div>
<div class="t " style="right:271.30px;top:522.78px;"><span style="transform:scaleX(0.857);transform-origin:100% 0">2</span></div>
<div class="t " style="left:947.50px;top:522.78px;width:0;"><span style="position:absolute;left:0;transform:translateX(-50%) scaleX(0.817);">X</span></div>
<div class="t " style="left:966.00px;top:522.78px;"><span style="transform:scaleX(0.868);transform-origin:0 0">X2_plan3...</span></div>
<div class="t " style="left:1026.80px;top:522.78px;"><span style="transform:scaleX(0.912);transform-origin:0 0">[table/column processed...</span></div>
<div class="t " style="left:1159.00px;top:522.78px;"><span style="transform:scaleX(0.888);transform-origin:0 0">rhel4...</span></div>
<div class="b" style="left:99.00px;top:552.00px;width:1098.00px;height:1.00px;background:#f0f0f4;"></div>
<div class="t " style="left:124.00px;top:538.90px;width:0;"><span style="position:absolute;left:0;transform:translateX(-50%) scaleX(0.817);">X</span></div>
<div class="t " style="right:993.30px;top:538.90px;"><span style="transform:scaleX(0.857);transform-origin:100% 0">99</span></div>
<div class="t " style="right:932.00px;top:538.90px;"><span style="transform:scaleX(0.857);transform-origin:100% 0">0</span></div>
<div class="t " style="right:873.00px;top:538.90px;"><span style="transform:scaleX(0.857);transform-origin:100% 0">0</span></div>
<div class="t " style="left:338.30px;top:538.90px;"><span style="transform:scaleX(0.881);transform-origin:0 0">JEPrepareData</span></div>
<div class="t " style="right:598.00px;top:538.90px;"><span style="transform:scaleX(0.857);transform-origin:100% 0">20</span></div>
<div class="t " style="right:526.00px;top:538.90px;"><span style="transform:scaleX(0.857);transform-origin:100% 0">13</span></div>
<div class="t " style="right:466.00px;top:538.90px;"><span style="transform:scaleX(0.848);transform-origin:100% 0">0,7</span></div>
<div class="t " style="right:390.00px;top:538.90px;"><span style="transform:scaleX(0.856);transform-origin:100% 0">3.736</span></div>
<div class="t " style="right:313.50px;top:538.90px;"><span style="transform:scaleX(0.857);transform-origin:100% 0">992</span></div>
<div class="t " style="right:271.30px;top:538.90px;"><span style="transform:scaleX(0.857);transform-origin:100% 0">1</span></div>
<div class="t " style="left:947.50px;top:538.90px;width:0;"><span style="position:absolute;left:0;transform:translateX(-50%) scaleX(0.817);">X</span></div>
<div class="t " style="left:966.00px;top:538.90px;"><span style="transform:scaleX(0.868);transform-origin:0 0">X2_plan3...</span></div>
<div class="t " style="left:1026.80px;top:538.90px;"><span style="transform:scaleX(0.884);transform-origin:0 0">[PythonTrace=.addInfo('I...</span></div>
<div class="t " style="left:1159.00px;top:538.90px;"><span style="transform:scaleX(0.888);transform-origin:0 0">rhel4...</span></div>
<div class="b" style="left:99.00px;top:568.00px;width:1098.00px;height:1.00px;background:#f0f0f4;"></div>
<div class="t " style="left:124.00px;top:555.02px;width:0;"><span style="position:absolute;left:0;transform:translateX(-50%) scaleX(0.817);">X</span></div>
<div class="t " style="right:993.30px;top:555.02px;"><span style="transform:scaleX(0.857);transform-origin:100% 0">99</span></div>
<div class="t " style="right:932.00px;top:555.02px;"><span style="transform:scaleX(0.857);transform-origin:100% 0">0</span></div>
<div class="t " style="right:873.00px;top:555.02px;"><span style="transform:scaleX(0.857);transform-origin:100% 0">0</span></div>
<div class="t " style="left:338.30px;top:555.02px;"><span style="transform:scaleX(0.875);transform-origin:0 0">JECreateNTuple</span></div>
<div class="t " style="right:598.00px;top:555.02px;"><span style="transform:scaleX(0.857);transform-origin:100% 0">20</span></div>
<div class="t " style="right:526.00px;top:555.02px;"><span style="transform:scaleX(0.857);transform-origin:100% 0">13</span></div>
<div class="t " style="right:466.00px;top:555.02px;"><span style="transform:scaleX(0.848);transform-origin:100% 0">0,7</span></div>
<div class="t " style="right:390.00px;top:555.02px;"><span style="transform:scaleX(0.856);transform-origin:100% 0">3.736</span></div>
<div class="t " style="right:313.50px;top:555.02px;"><span style="transform:scaleX(0.857);transform-origin:100% 0">572</span></div>
<div class="t " style="right:271.30px;top:555.02px;"><span style="transform:scaleX(0.857);transform-origin:100% 0">1</span></div>
<div class="t " style="left:947.50px;top:555.02px;width:0;"><span style="position:absolute;left:0;transform:translateX(-50%) scaleX(0.817);">X</span></div>
<div class="t " style="left:966.00px;top:555.02px;"><span style="transform:scaleX(0.868);transform-origin:0 0">X2_plan3...</span></div>
<div class="t " style="left:1026.80px;top:555.02px;"><span style="transform:scaleX(0.890);transform-origin:0 0">[PerformanceTrace={"det...</span></div>
<div class="t " style="left:1159.00px;top:555.02px;"><span style="transform:scaleX(0.888);transform-origin:0 0">rhel4...</span></div>
</body></html>
